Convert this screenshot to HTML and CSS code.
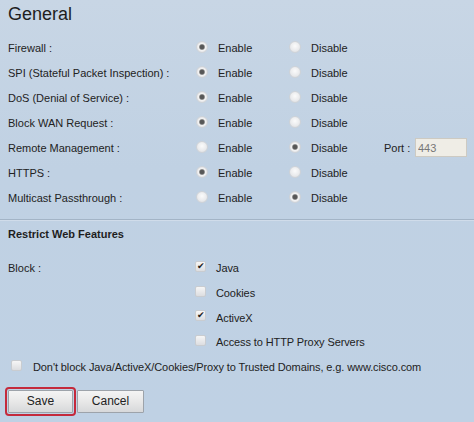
FILE: index.html
```html
<!DOCTYPE html>
<html>
<head>
<meta charset="utf-8">
<link rel="stylesheet" href="styles.css">
</head>
<body>
<div class="page">
  <h1 class="title">General</h1>
  <div class="rows">
    <div class="row"><span class="label">Firewall :</span>
      <label class="opt"><input type="radio" name="fw" checked><span>Enable</span></label>
      <label class="opt"><input type="radio" name="fw"><span>Disable</span></label></div>
    <div class="row"><span class="label">SPI (Stateful Packet Inspection) :</span>
      <label class="opt"><input type="radio" name="spi" checked><span>Enable</span></label>
      <label class="opt"><input type="radio" name="spi"><span>Disable</span></label></div>
    <div class="row"><span class="label">DoS (Denial of Service) :</span>
      <label class="opt"><input type="radio" name="dos" checked><span>Enable</span></label>
      <label class="opt"><input type="radio" name="dos"><span>Disable</span></label></div>
    <div class="row"><span class="label">Block WAN Request :</span>
      <label class="opt"><input type="radio" name="wan" checked><span>Enable</span></label>
      <label class="opt"><input type="radio" name="wan"><span>Disable</span></label></div>
    <div class="row"><span class="label">Remote Management :</span>
      <label class="opt"><input type="radio" name="rm"><span>Enable</span></label>
      <label class="opt"><input type="radio" name="rm" checked><span>Disable</span></label>
      <span class="port">Port :</span><input class="port-input" type="text" value="443"></div>
    <div class="row"><span class="label">HTTPS :</span>
      <label class="opt"><input type="radio" name="https" checked><span>Enable</span></label>
      <label class="opt"><input type="radio" name="https"><span>Disable</span></label></div>
    <div class="row"><span class="label">Multicast Passthrough :</span>
      <label class="opt"><input type="radio" name="mc"><span>Enable</span></label>
      <label class="opt"><input type="radio" name="mc" checked><span>Disable</span></label></div>
  </div>
  <hr class="sep">
  <h2 class="section">Restrict Web Features</h2>
  <div class="block">
    <span class="label">Block :</span>
    <div class="checks">
      <label class="chk"><input type="checkbox" checked><span>Java</span></label>
      <label class="chk"><input type="checkbox"><span>Cookies</span></label>
      <label class="chk"><input type="checkbox" checked><span>ActiveX</span></label>
      <label class="chk"><input type="checkbox"><span>Access to HTTP Proxy Servers</span></label>
    </div>
  </div>
  <label class="chk trusted"><input type="checkbox"><span>Don't block Java/ActiveX/Cookies/Proxy to Trusted Domains, e.g. www.cisco.com</span></label>
  <div class="buttons">
    <span class="focus"><button class="btn">Save</button></span>
    <button class="btn">Cancel</button>
  </div>
</div>
</body>
</html>
```
FILE: styles.css
```css
html, body {
  margin: 0;
  padding: 0;
}
body {
  width: 474px;
  height: 422px;
  overflow: hidden;
  background: linear-gradient(to bottom, #c8d6e5 0%, #c0d1e3 40%, #bfd1e4 100%);
  font-family: "Liberation Sans", Arial, sans-serif;
  font-size: 11px;
  color: #222;
}
.page {
  padding: 0 0 0 8px;
}
.title {
  margin: 5px 0 12px 0;
  font-size: 18px;
  line-height: 18px;
  font-weight: normal;
  color: #1e1e1e;
}
.row {
  display: flex;
  align-items: center;
  height: 25px;
}
.label {
  width: 188px;
  flex: none;
}
.opt {
  display: flex;
  align-items: center;
  width: 93px;
  flex: none;
}
.opt input[type=radio] {
  appearance: none;
  -webkit-appearance: none;
  margin: 0 10px 0 0;
  width: 12px;
  height: 12px;
  border-radius: 50%;
  border: 1px solid #cfd3d8;
  background: radial-gradient(circle at 50% 40%, #fbfbfb 0%, #e9eaec 60%, #d8dadd 100%);
  box-sizing: border-box;
  position: relative;
  top: -1px;
}
.opt input[type=radio]:checked {
  background: radial-gradient(circle, #555 0, #5a5a5a 2px, #9a9a9a 2.6px, #f3f3f3 3.4px, #e6e7e9 70%, #d4d6d9 100%);
}
.port {
  margin-left: 2px;
  width: 31px;
}
.port-input {
  box-sizing: border-box;
  width: 52px;
  height: 19px;
  margin: 0;
  padding: 0 2px;
  border: 1px solid #cdcac2;
  background: #efede6;
  color: #777;
  font-family: "Liberation Sans", Arial, sans-serif;
  font-size: 11px;
}
.sep {
  margin: 9px 0 0 -8px;
  height: 0;
  border: 0;
  border-top: 1px solid #a3b4c6;
  border-bottom: 1px solid #d0dcea;
}
.section {
  margin: 0;
  height: 28px;
  line-height: 27px;
  font-size: 11px;
  font-weight: bold;
  color: #1e1e1e;
}
.block {
  display: flex;
  margin-top: 7px;
}
.block .label {
  height: 25px;
  line-height: 25px;
  width: 187px;
}
.checks {
  display: flex;
  flex-direction: column;
}
.chk {
  display: flex;
  align-items: center;
  height: 24.7px;
  letter-spacing: -0.1px;
}
.chk input[type=checkbox] {
  appearance: none;
  -webkit-appearance: none;
  margin: 0 10px 0 0;
  width: 11px;
  height: 11px;
  border: 1px solid #c9ccd0;
  border-radius: 2px;
  background: linear-gradient(to bottom, #f6f6f6, #dcdde0);
  box-sizing: border-box;
  position: relative;
  top: -2px;
}
.chk input[type=checkbox]:checked::after {
  content: "\2714";
  position: absolute;
  left: 1px;
  top: -1px;
  font-size: 9px;
  line-height: 10px;
  color: #222;
}
.trusted {
  margin-top: 0;
  padding-left: 3px;
  height: 25px;
}
.trusted input[type=checkbox] {
  margin-right: 11px;
}
.buttons {
  display: flex;
  align-items: center;
  margin: 7px 0 0 -3px;
  gap: 1px;
}
.focus {
  display: inline-flex;
  padding: 1px;
  border: 2px solid #c42a3c;
  border-radius: 4px;
}
.btn {
  margin: 0;
  width: 65px;
  height: 23px;
  border: 1px solid #9da3aa;
  border-radius: 1px;
  background: linear-gradient(to bottom, #f4f4f4 0%, #e8e8e8 50%, #d7d8da 100%);
  font-family: "Liberation Sans", Arial, sans-serif;
  font-size: 12px;
  color: #222;
  padding: 0;
}
.buttons > .btn {
  width: 67px;
}
```
